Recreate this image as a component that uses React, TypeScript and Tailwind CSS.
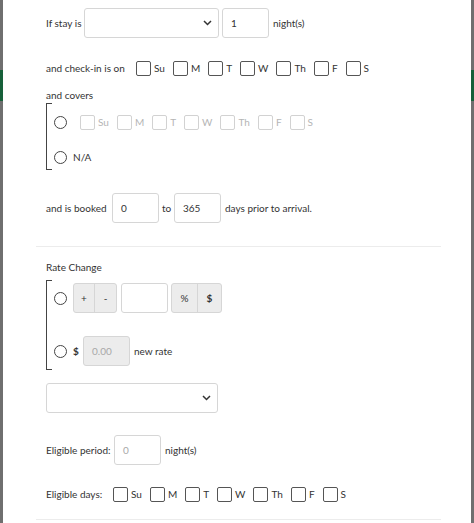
import React from "react";

const days = ["Su", "M", "T", "W", "Th", "F", "S"];

function Box({ label, muted }: { label: string; muted?: boolean }) {
  return (
    <label className="flex h-[15px] items-center">
      <span
        className={`block h-[15px] w-[15px] shrink-0 rounded-[2px] border ${muted ? "border-[#d2d2d2]" : "border-[#555]"}`}
      />
      <span className={`ml-[3px] mr-[8px] ${muted ? "text-[#b5b5b5]" : "text-[#333]"}`}>{label}</span>
    </label>
  );
}

function Radio() {
  return <span className="block h-[13px] w-[13px] shrink-0 rounded-full border border-[#444]" />;
}

function Field({ value, muted, bg }: { value?: string; muted?: boolean; bg?: string }) {
  return (
    <div
      className={`flex h-[30px] w-[47px] shrink-0 items-center rounded-[3px] border border-[#d6d6d6] px-[8px] ${bg ?? "bg-white"} ${muted ? "text-[#a8a8a8]" : "text-[#333]"}`}
    >
      {value}
    </div>
  );
}

function Select({ w }: { w: string }) {
  return (
    <div className={`flex h-[30px] ${w} shrink-0 items-center justify-end rounded-[3px] border border-[#d6d6d6] pr-[6px]`}>
      <svg width="9" height="6" viewBox="0 0 9 6" fill="none">
        <path d="M1 1l3.5 3.5L8 1" stroke="#333" strokeWidth="1.5" />
      </svg>
    </div>
  );
}

function Bracket() {
  return <div className="w-[6px] shrink-0 self-stretch border-y border-l border-[#444]" />;
}

function Strip() {
  return (
    <div className="flex w-[3px] flex-col bg-[#6f6f6f]">
      <div className="h-[70px]" />
      <div className="h-[31px] bg-[#17603a]" />
    </div>
  );
}

export default function App() {
  return (
    <div
      className="flex h-[523px] w-[474px] overflow-hidden bg-white text-[10px] leading-[14px] text-[#333]"
      style={{ fontFamily: "Lato, 'Liberation Sans', sans-serif" }}
    >
      <Strip />
      <div className="flex-1 bg-white pl-[33px] pr-[30px]">
        <div className="pl-[10px]">
          <div className="mt-[8px] flex h-[30px] items-center">
            <span className="w-[38px] shrink-0">If stay is</span>
            <Select w="w-[135px]" />
            <div className="ml-[3px]">
              <Field value="1" />
            </div>
            <span className="ml-[4px]">night(s)</span>
          </div>

          <div className="mt-[20px] flex h-[20px] items-center">
            <span className="w-[90px] shrink-0">and check-in is on</span>
            {days.map((d) => (
              <Box key={d} label={d} />
            ))}
          </div>

          <div className="mt-[10px] h-[14px]">and covers</div>
          <div className="mt-[1px] flex h-[67px]">
            <Bracket />
            <div className="ml-[2px] flex flex-col pt-[12px]">
              <div className="flex h-[14px] items-center">
                <Radio />
                <span className="w-[13px] shrink-0" />
                {days.map((d) => (
                  <Box key={d} label={d} muted />
                ))}
              </div>
              <div className="mt-[21px] flex h-[14px] items-center">
                <Radio />
                <span className="ml-[6px]">N/A</span>
              </div>
            </div>
          </div>

          <div className="mt-[23px] flex h-[30px] items-center">
            <span className="w-[66px] shrink-0">and is booked</span>
            <Field value="0" />
            <span className="w-[15px] shrink-0 pl-[3px]">to</span>
            <Field value="365" />
            <span className="ml-[4px]">days prior to arrival.</span>
          </div>
        </div>

        <div className="mt-[23px] border-t border-[#ececec]" />

        <div className="pl-[10px]">
          <div className="mt-[13px] h-[14px]">Rate Change</div>
          <div className="mt-[6px] flex h-[90px]">
            <Bracket />
            <div className="ml-[2px] flex flex-col pt-[3px]">
              <div className="flex h-[30px] items-center">
                <Radio />
                <div className="ml-[6px] flex h-[30px] overflow-hidden rounded-[3px] border border-[#d6d6d6] bg-[#ececec]">
                  <span className="flex w-[21px] items-center justify-center border-r border-[#d6d6d6]">+</span>
                  <span className="flex w-[21px] items-center justify-center">-</span>
                </div>
                <div className="ml-[4px]">
                  <Field />
                </div>
                <div className="ml-[3px] flex h-[30px] overflow-hidden rounded-[3px] border border-[#d6d6d6] bg-[#ececec]">
                  <span className="flex w-[26px] items-center justify-center border-r border-[#d6d6d6]">%</span>
                  <span className="flex w-[23px] items-center justify-center font-bold">$</span>
                </div>
              </div>
              <div className="mt-[23px] flex h-[30px] items-center">
                <Radio />
                <span className="ml-[6px] w-[9px] shrink-0 font-bold">$</span>
                <div className="ml-[1px]">
                  <Field value="0.00" muted bg="bg-[#ececec]" />
                </div>
                <span className="ml-[4px]">new rate</span>
              </div>
            </div>
          </div>

          <div className="mt-[13px]">
            <Select w="w-[172px]" />
          </div>

          <div className="mt-[22px] flex h-[30px] items-center">
            <span className="w-[68px] shrink-0">Eligible period:</span>
            <Field value="0" muted />
            <span className="ml-[4px]">night(s)</span>
          </div>

          <div className="mt-[19px] flex h-[20px] items-center">
            <span className="w-[67px] shrink-0">Eligible days:</span>
            {days.map((d) => (
              <Box key={d} label={d} />
            ))}
          </div>
        </div>

        <div className="mt-[15px] border-t border-[#ececec]" />
      </div>
      <Strip />
    </div>
  );
}
